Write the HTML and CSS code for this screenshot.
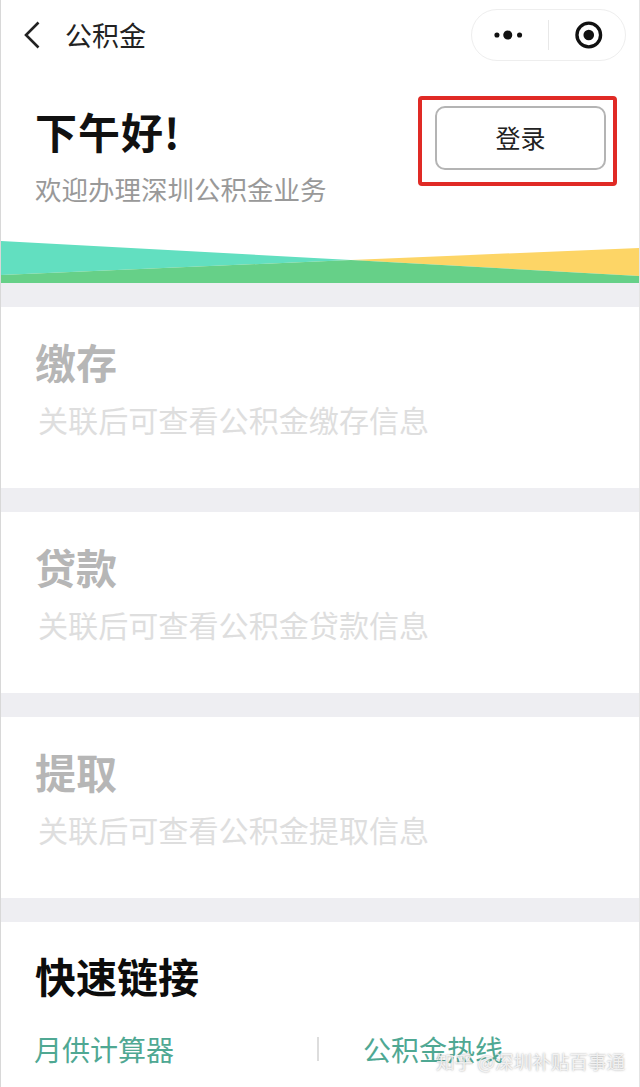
FILE: index.html

```html
<!DOCTYPE html>
<html lang="zh-CN">
<head>
  <meta charset="UTF-8" />
  <meta name="viewport" content="width=device-width, initial-scale=1.0"/>
  <title>公积金</title>
  <link rel="stylesheet" href="styles.css">
</head>
<body>
<div class="page">

  <div class="navbar">
    <svg class="back" width="17" height="28" viewBox="0 0 17 28">
      <path d="M15.5 1.5 L3 14 L15.5 26.5" fill="none" stroke="#222" stroke-width="2.6"/>
    </svg>
    <span class="nav-title">公积金</span>
    <div class="capsule">
      <svg width="32" height="12" viewBox="0 0 32 12">
        <circle cx="4" cy="6" r="2.6" fill="#111"/>
        <circle cx="15" cy="6" r="4.6" fill="#111"/>
        <circle cx="27" cy="6" r="2.6" fill="#111"/>
      </svg>
      <span class="capsule-line"></span>
      <svg width="30" height="30" viewBox="0 0 30 30">
        <circle cx="15" cy="15" r="12" fill="none" stroke="#111" stroke-width="3.4"/>
        <circle cx="15" cy="15" r="5.4" fill="#111"/>
      </svg>
    </div>
  </div>

  <div class="hello">
    <div>
      <h1>下午好!</h1>
      <p class="welcome">欢迎办理深圳公积金业务</p>
    </div>
    <div class="login-box">
      <button class="login" type="button">登录</button>
    </div>
  </div>

  <svg class="band" width="640" height="42" viewBox="0 0 640 42" preserveAspectRatio="none">
    <polygon points="0,0 351,19 0,34" fill="#62dfc0"/>
    <polygon points="351,19 640,7 640,35" fill="#fdd566"/>
    <polygon points="0,34 351,19 640,35 640,42 0,42" fill="#66d088"/>
  </svg>

  <div class="gap"></div>
  <section class="card">
    <h2>缴存</h2>
    <p>关联后可查看公积金缴存信息</p>
  </section>

  <div class="gap"></div>
  <section class="card">
    <h2>贷款</h2>
    <p>关联后可查看公积金贷款信息</p>
  </section>

  <div class="gap"></div>
  <section class="card">
    <h2>提取</h2>
    <p>关联后可查看公积金提取信息</p>
  </section>

  <div class="gap"></div>
  <section class="links">
    <h3>快速链接</h3>
    <div class="link-row">
      <a class="link">月供计算器</a>
      <span class="link-line"></span>
      <a class="link">公积金热线</a>
    </div>
  </section>

  <div class="watermark">知乎 @深圳补贴百事通</div>
</div>
</body>
</html>
```

FILE: styles.css

```css
html, body { margin: 0; padding: 0; background: #fff; }
body { font-family: "Noto Sans CJK SC", "Noto Sans", sans-serif; color: #111; }
h1, h2, h3, p { margin: 0; font-weight: normal; }

.page { position: relative; width: 640px; height: 1087px; overflow: hidden; box-sizing: border-box; border-left: 1px solid #d8d8d8; border-right: 1px solid #e4e4e4; }

.navbar { display: flex; align-items: center; height: 70px; margin-bottom: 2px; box-sizing: border-box; padding: 0 13px 0 22px; }
.back { margin-right: 25px; }
.nav-title { font-size: 27px; line-height: 36px; color: #222; }
.capsule { display: flex; align-items: center; margin-left: auto; box-sizing: border-box; width: 155px; height: 52px; padding: 0 21px 0 21px; border: 1.5px solid #eeeeee; border-radius: 26px; }
.capsule-line { width: 1px; height: 30px; margin: 0 25px 0 24px; background: #e8e8e8; }

.hello { display: flex; justify-content: space-between; height: 169px; box-sizing: border-box; padding: 24px 22px 0 34px; }
h1 { font-size: 42px; line-height: 72px; font-weight: 700; letter-spacing: 1px; color: #111; margin-top: -1px; }
.welcome { font-size: 26.5px; line-height: 36px; color: #999; margin-top: 4px; }
.login-box { display: flex; justify-content: flex-end; align-items: flex-start; box-sizing: border-box; width: 199px; height: 90px; padding: 6px 7px 0 0; border: 4px solid #e02a25; border-radius: 4px; }
.login { width: 171px; height: 64px; padding: 0 0 2px; background: #fff; border: 2px solid #b4b4b4; border-radius: 10px; font-family: inherit; font-size: 25px; color: #222; }

.band { display: block; width: 100%; height: 42px; }
.gap { height: 24px; background: #eeeef2; }

.card { height: 181px; box-sizing: border-box; padding: 27px 0 0 34px; }
.card h2 { font-size: 41px; line-height: 54px; font-weight: 700; color: #b6b6b6; }
.card p { margin: 10px 0 0 3px; font-size: 30.1px; line-height: 42px; color: #dedede; }

.links { height: 166px; box-sizing: border-box; padding: 25px 0 0 34px; }
h3 { font-size: 41px; line-height: 56px; font-weight: 700; color: #0c0c0c; }
.link-row { display: flex; align-items: center; margin: 26px 0 0 -1px; }
.link { width: 140px; font-size: 28px; line-height: 40px; white-space: nowrap; color: #4fa893; }
.link-line { width: 2px; height: 24px; margin: 0 44px 0 143px; background: #dddddd; }

.watermark { position: absolute; left: 435px; top: 1047px; font-size: 18.6px; line-height: 28px; white-space: nowrap; color: rgba(255,255,255,0.8); text-shadow: 0 0 2px rgba(110,110,110,0.7); }
```
